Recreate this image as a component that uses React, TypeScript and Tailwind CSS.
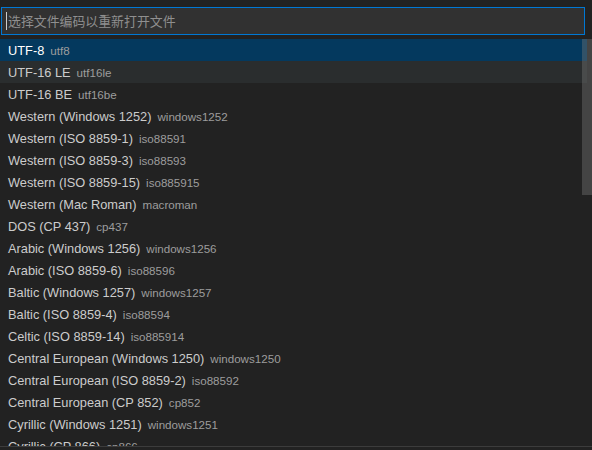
const items: [string, string][] = [
  ["UTF-8", "utf8"],
  ["UTF-16 LE", "utf16le"],
  ["UTF-16 BE", "utf16be"],
  ["Western (Windows 1252)", "windows1252"],
  ["Western (ISO 8859-1)", "iso88591"],
  ["Western (ISO 8859-3)", "iso88593"],
  ["Western (ISO 8859-15)", "iso885915"],
  ["Western (Mac Roman)", "macroman"],
  ["DOS (CP 437)", "cp437"],
  ["Arabic (Windows 1256)", "windows1256"],
  ["Arabic (ISO 8859-6)", "iso88596"],
  ["Baltic (Windows 1257)", "windows1257"],
  ["Baltic (ISO 8859-4)", "iso88594"],
  ["Celtic (ISO 8859-14)", "iso885914"],
  ["Central European (Windows 1250)", "windows1250"],
  ["Central European (ISO 8859-2)", "iso88592"],
  ["Central European (CP 852)", "cp852"],
  ["Cyrillic (Windows 1251)", "windows1251"],
  ["Cyrillic (CP 866)", "cp866"],
];

export default function App() {
  return (
    <div
      className="flex h-[450px] w-[592px] flex-col bg-[#222222] text-[12.8px] text-[#cccccc]"
      style={{ fontFamily: '"Liberation Sans", "Noto Sans CJK SC", sans-serif' }}
    >
      <div className="pl-[1px] pr-[7px] pt-[7px]">
        <div className="flex h-[28px] items-center border border-[#0078d4] bg-[#313131] pl-[4px]">
          <span className="h-[18px] w-px bg-[#cccccc]" />
          <span
            className="ml-px text-[12.9px] text-[#8f8f8f]"
            style={{ fontFamily: '"Noto Sans CJK SC", sans-serif' }}
          >
            选择文件编码以重新打开文件
          </span>
        </div>
      </div>
      <div className="relative mt-[4px] h-[407px] overflow-hidden">
        <ul className="pr-[5px]">
          {items.map(([label, desc], i) => (
            <li
              key={label}
              className={
                "flex h-[22px] items-center pl-[8px] pt-px " +
                (i === 0 ? "bg-[#04395e] text-white" : i === 1 ? "bg-[#2a2d2e]" : "")
              }
            >
              <span>{label}</span>
              <span className="ml-[6px] text-[11.6px] text-[#9d9d9d]">{desc}</span>
            </li>
          ))}
        </ul>
        <div className="absolute right-0 top-0 h-[156px] w-[10px] bg-[#797979]/40" />
      </div>
      <div className="h-px bg-[#3c3c3c]" />
      <div className="flex-1" />
    </div>
  );
}
